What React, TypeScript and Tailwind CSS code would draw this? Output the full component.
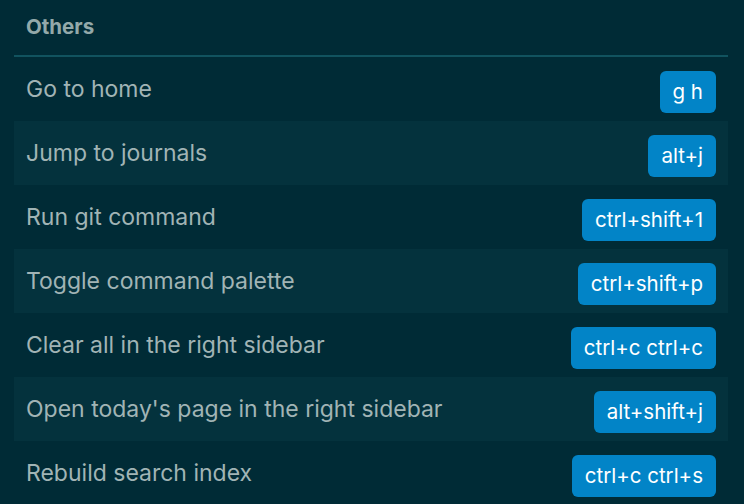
import React from 'react';

const shortcuts: [string, string][] = [
  ['Go to home', 'g h'],
  ['Jump to journals', 'alt+j'],
  ['Run git command', 'ctrl+shift+1'],
  ['Toggle command palette', 'ctrl+shift+p'],
  ['Clear all in the right sidebar', 'ctrl+c ctrl+c'],
  ["Open today's page in the right sidebar", 'alt+shift+j'],
  ['Rebuild search index', 'ctrl+c ctrl+s'],
];

export default function App() {
  return (
    <div className="w-[744px] h-[504px] overflow-hidden bg-[#002b36] font-['Inter','Liberation_Sans',sans-serif]">
      <div className="pl-[14px] pr-4">
        <div className="h-[55px] flex items-center px-3 text-[20.5px] font-bold text-[#93a9aa]">Others</div>
        <div className="border-t-2 border-[#11535f]" />
        {shortcuts.map(([label, keys], i) => (
          <div
            key={label}
            className={`h-16 flex items-center justify-between px-3 ${i % 2 === 1 ? 'bg-[#04323d]' : ''}`}
          >
            <span className="text-[23px] text-[#a1b4b5]">{label}</span>
            <kbd className="mt-[6px] h-[42px] flex items-center px-[13px] rounded-md bg-[#0284c7] text-white text-[20.5px] font-['Inter','Liberation_Sans',sans-serif]">
              {keys}
            </kbd>
          </div>
        ))}
      </div>
    </div>
  );
}
